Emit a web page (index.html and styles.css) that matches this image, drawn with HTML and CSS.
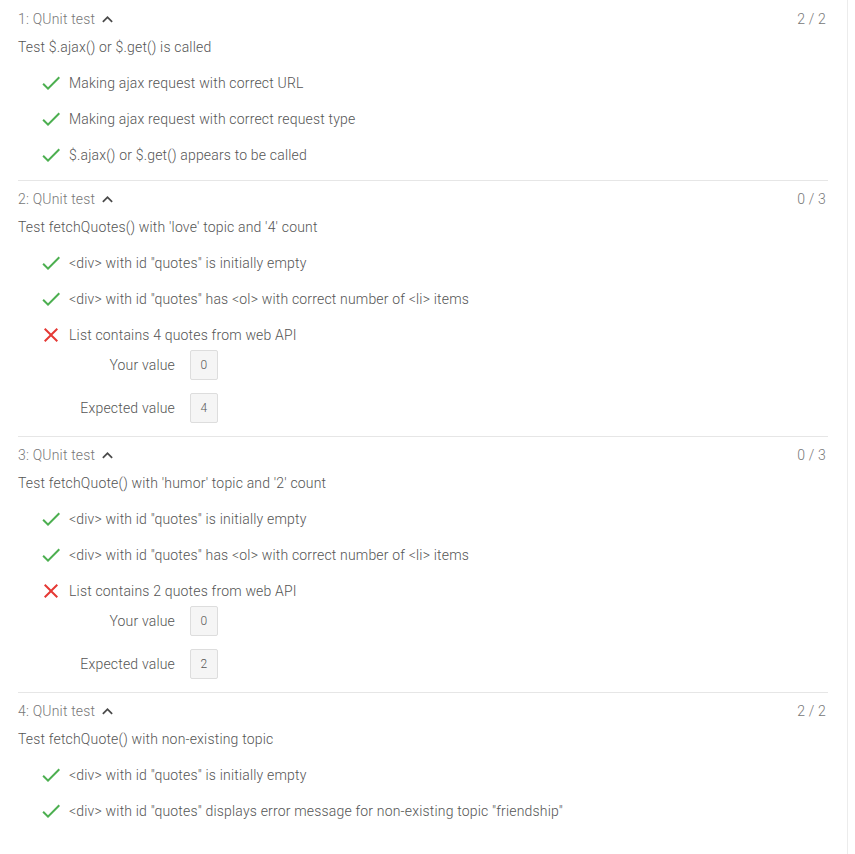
FILE: index.html
```html
<!DOCTYPE html>
<html lang="en">
<head>
    <meta charset="UTF-8">
    <title>QUnit results</title>
    <link rel="stylesheet" href="styles.css">
</head>
<body>

<div class="page">

    <div class="test">
        <div class="test-head">
            <span class="test-name">1: QUnit test
                <svg class="chevron" viewBox="0 0 24 24"><path d="M12 8l-6 6 1.41 1.41L12 10.83l4.59 4.58L18 14z"/></svg>
            </span>
            <span class="score">2 / 2</span>
        </div>
        <div class="test-title">Test $.ajax() or $.get() is called</div>
        <ul class="asserts">
            <li class="pass"><svg viewBox="0 0 24 24"><path d="M9 16.17L4.83 12l-1.42 1.41L9 19 21 7l-1.41-1.41z"/></svg>Making ajax request with correct URL</li>
            <li class="pass"><svg viewBox="0 0 24 24"><path d="M9 16.17L4.83 12l-1.42 1.41L9 19 21 7l-1.41-1.41z"/></svg>Making ajax request with correct request type</li>
            <li class="pass"><svg viewBox="0 0 24 24"><path d="M9 16.17L4.83 12l-1.42 1.41L9 19 21 7l-1.41-1.41z"/></svg>$.ajax() or $.get() appears to be called</li>
        </ul>
    </div>

    <div class="test">
        <div class="test-head">
            <span class="test-name">2: QUnit test
                <svg class="chevron" viewBox="0 0 24 24"><path d="M12 8l-6 6 1.41 1.41L12 10.83l4.59 4.58L18 14z"/></svg>
            </span>
            <span class="score">0 / 3</span>
        </div>
        <div class="test-title">Test fetchQuotes() with 'love' topic and '4' count</div>
        <ul class="asserts">
            <li class="pass"><svg viewBox="0 0 24 24"><path d="M9 16.17L4.83 12l-1.42 1.41L9 19 21 7l-1.41-1.41z"/></svg>&lt;div&gt; with id "quotes" is initially empty</li>
            <li class="pass"><svg viewBox="0 0 24 24"><path d="M9 16.17L4.83 12l-1.42 1.41L9 19 21 7l-1.41-1.41z"/></svg>&lt;div&gt; with id "quotes" has &lt;ol&gt; with correct number of &lt;li&gt; items</li>
            <li class="fail"><svg viewBox="0 0 24 24"><path d="M19 6.41L17.59 5 12 10.59 6.41 5 5 6.41 10.59 12 5 17.59 6.41 19 12 13.41 17.59 19 19 17.59 13.41 12z"/></svg>List contains 4 quotes from web API</li>
        </ul>
        <div class="values">
            <div class="value-row"><span class="value-label">Your value</span><span class="value-box">0</span></div>
            <div class="value-row"><span class="value-label">Expected value</span><span class="value-box">4</span></div>
        </div>
    </div>

    <div class="test">
        <div class="test-head">
            <span class="test-name">3: QUnit test
                <svg class="chevron" viewBox="0 0 24 24"><path d="M12 8l-6 6 1.41 1.41L12 10.83l4.59 4.58L18 14z"/></svg>
            </span>
            <span class="score">0 / 3</span>
        </div>
        <div class="test-title">Test fetchQuote() with 'humor' topic and '2' count</div>
        <ul class="asserts">
            <li class="pass"><svg viewBox="0 0 24 24"><path d="M9 16.17L4.83 12l-1.42 1.41L9 19 21 7l-1.41-1.41z"/></svg>&lt;div&gt; with id "quotes" is initially empty</li>
            <li class="pass"><svg viewBox="0 0 24 24"><path d="M9 16.17L4.83 12l-1.42 1.41L9 19 21 7l-1.41-1.41z"/></svg>&lt;div&gt; with id "quotes" has &lt;ol&gt; with correct number of &lt;li&gt; items</li>
            <li class="fail"><svg viewBox="0 0 24 24"><path d="M19 6.41L17.59 5 12 10.59 6.41 5 5 6.41 10.59 12 5 17.59 6.41 19 12 13.41 17.59 19 19 17.59 13.41 12z"/></svg>List contains 2 quotes from web API</li>
        </ul>
        <div class="values">
            <div class="value-row"><span class="value-label">Your value</span><span class="value-box">0</span></div>
            <div class="value-row"><span class="value-label">Expected value</span><span class="value-box">2</span></div>
        </div>
    </div>

    <div class="test last">
        <div class="test-head">
            <span class="test-name">4: QUnit test
                <svg class="chevron" viewBox="0 0 24 24"><path d="M12 8l-6 6 1.41 1.41L12 10.83l4.59 4.58L18 14z"/></svg>
            </span>
            <span class="score">2 / 2</span>
        </div>
        <div class="test-title">Test fetchQuote() with non-existing topic</div>
        <ul class="asserts">
            <li class="pass"><svg viewBox="0 0 24 24"><path d="M9 16.17L4.83 12l-1.42 1.41L9 19 21 7l-1.41-1.41z"/></svg>&lt;div&gt; with id "quotes" is initially empty</li>
            <li class="pass"><svg viewBox="0 0 24 24"><path d="M9 16.17L4.83 12l-1.42 1.41L9 19 21 7l-1.41-1.41z"/></svg>&lt;div&gt; with id "quotes" displays error message for non-existing topic "friendship"</li>
        </ul>
    </div>

</div>

</body>
</html>
```

FILE: styles.css
```css
body {
    margin: 0;
    font-family: Roboto, "Noto Sans", Arial, sans-serif;
    font-size: 14px;
    font-weight: 300;
    letter-spacing: 0.18px;
    color: #555;
    background-color: #fff;
}

.page {
    width: 848px;
    min-height: 854px;
    border-right: 1px solid #ececec;
    box-sizing: border-box;
}

.test {
    margin: 0 19px 0 18px;
    padding: 9px 0 15px;
    border-bottom: 1px solid #e6e6e6;
}

.test + .test {
    padding-top: 8px;
}

.test.last {
    border-bottom: none;
}

.test-head {
    display: flex;
    justify-content: space-between;
    align-items: center;
    height: 20px;
    line-height: 20px;
    color: #777;
}

.test-name {
    display: flex;
    align-items: center;
}

.chevron {
    width: 21px;
    height: 21px;
    margin-left: 2px;
    fill: #4a4a4a;
}

.score {
    margin-right: 2px;
}

.test-title {
    margin-top: 8px;
    line-height: 20px;
}

.asserts {
    list-style: none;
    margin: 16px 0 0;
    padding: 0;
    display: flex;
    flex-direction: column;
    gap: 16px;
}

.asserts li {
    display: flex;
    align-items: center;
    height: 20px;
    line-height: 20px;
}

.asserts svg {
    width: 24px;
    height: 24px;
    margin: -2px 6px -2px 21px;
    flex-shrink: 0;
}

.pass svg {
    fill: #4caf50;
}

.fail svg {
    fill: #e53935;
}

.values {
    margin: 5px 0 -2px;
    display: flex;
    flex-direction: column;
    gap: 13px;
}

.value-row {
    display: flex;
    align-items: center;
}

.value-label {
    width: 157px;
    text-align: right;
    margin-right: 15px;
}

.value-box {
    width: 26px;
    height: 28px;
    line-height: 28px;
    text-align: center;
    font-size: 12px;
    background-color: #f5f5f5;
    border: 1px solid #ddd;
    border-radius: 2px;
}
```
